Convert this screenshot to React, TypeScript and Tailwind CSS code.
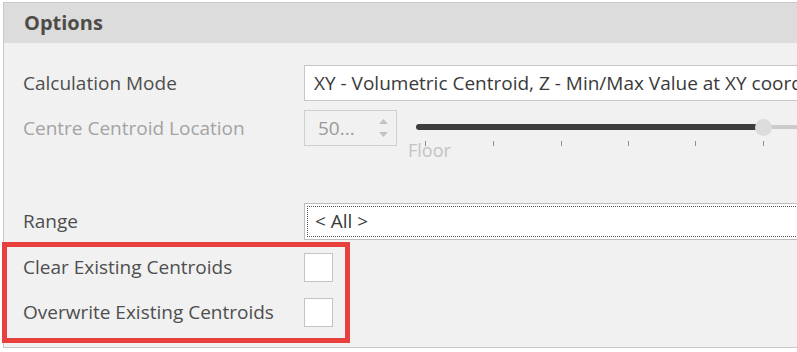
import React from 'react';

const ticks = [28, 96, 164, 231, 298, 366];

const Label = ({ children, muted }: { children: React.ReactNode; muted?: boolean }) => (
  <div className={`w-[281px] shrink-0 text-[19px] ${muted ? 'text-[#a3a3a3]' : 'text-[#4e4e4e]'}`}>{children}</div>
);

const Checkbox = () => <div className="w-[29px] h-[29px] bg-white border border-[#c4c4c4]" />;

export default function App() {
  return (
    <div className="w-[797px] h-[352px] overflow-hidden bg-white font-['Open_Sans',sans-serif]">
      <div className="ml-[3px] mt-[2px] w-[900px] h-[346px] border-l border-t border-b border-[#c9c9c9] bg-[#f1f1f1]">
        {/* Header */}
        <div className="h-[40px] bg-[#dcdcdc] pl-[20px] flex items-center text-[20px] font-bold text-[#4f4c48]">
          Options
        </div>

        {/* Body */}
        <div className="pl-[19px] pt-[22px]">
          <div className="flex items-center h-[36px]">
            <Label>Calculation Mode</Label>
            <div className="flex-1 h-full bg-white border border-[#c6c6c6] flex items-center pl-[9px] text-[19px] text-[#3a3a3a] whitespace-nowrap overflow-hidden">
              XY - Volumetric Centroid, Z - Min/Max Value at XY coordinates
            </div>
          </div>

          <div className="flex items-center h-[36px] mt-[9px]">
            <Label muted>Centre Centroid Location</Label>
            <div className="w-[93px] h-full border border-[#cfcfcf] flex items-center pl-[13px] pr-[8px] text-[19px] text-[#9a9a9a]">
              <span className="flex-1">50...</span>
              <div className="flex flex-col gap-[8px] items-center">
                <svg width="9" height="5" viewBox="0 0 9 5"><path d="M0 5 L4.5 0 L9 5 Z" fill="#c2c2c2" /></svg>
                <svg width="9" height="5" viewBox="0 0 9 5"><path d="M0 0 L4.5 5 L9 0 Z" fill="#c2c2c2" /></svg>
              </div>
            </div>
            {/* Slider */}
            <div className="relative flex-1 h-full">
              <div className="absolute left-[366px] right-0 top-[15px] h-[4px] bg-[#cbcbcb]" />
              <div className="absolute left-[19px] w-[350px] top-[14px] h-[6px] rounded-full bg-[#3d3d3d]" />
              <div className="absolute left-[358px] top-[9px] w-[17px] h-[17px] rounded-full bg-[#dcdcdc]" />
              <span className="absolute left-[11px] top-[28px] text-[18px] leading-[24px] text-[#c3c3c3]">Floor</span>
              {ticks.map((x) => (
                <div key={x} className="absolute top-[31px] w-px h-[5px] bg-[#8f8f8f]" style={{ left: x }} />
              ))}
            </div>
          </div>

          <div className="flex items-center h-[37px] mt-[57px]">
            <Label>Range</Label>
            <div className="flex-1 h-full bg-white border border-[#bdbdbd] p-[2px]">
              <div className="h-full border border-dotted border-[#555] flex items-center pl-[7px] text-[19px] text-[#3a3a3a]">
                &lt; All &gt;
              </div>
            </div>
          </div>

          {/* Highlighted options */}
          <div className="ml-[-21px] mt-[2px] w-[348px] border-[5px] border-[#e8403f] pl-[16px] pt-[6px] pb-[11px] flex flex-col gap-[16px]">
            <div className="flex items-center">
              <Label>Clear Existing Centroids</Label>
              <Checkbox />
            </div>
            <div className="flex items-center">
              <Label>Overwrite Existing Centroids</Label>
              <Checkbox />
            </div>
          </div>
        </div>
      </div>
    </div>
  );
}
